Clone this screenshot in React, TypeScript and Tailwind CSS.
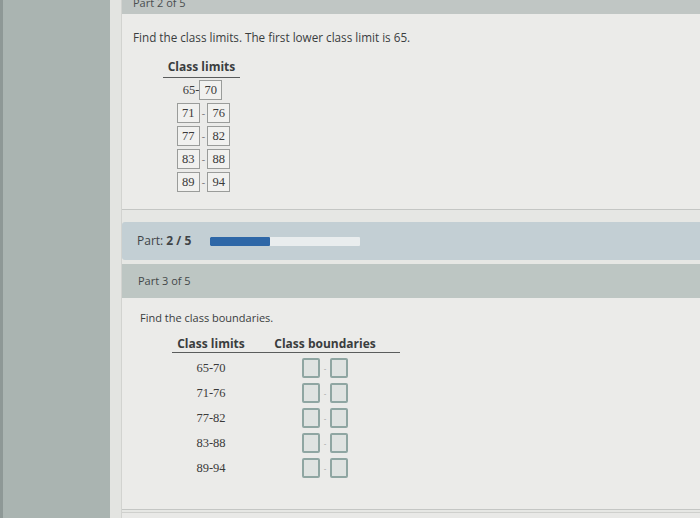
import React from 'react';

const limits = [
  ['71', '76'],
  ['77', '82'],
  ['83', '88'],
  ['89', '94'],
];

const classes = ['65-70', '71-76', '77-82', '83-88', '89-94'];

function NumBox({ value }: { value: string }) {
  return (
    <div className="w-[23px] h-[20px] flex items-center justify-center border border-[#9a9c9a] bg-[#f1f1ef] text-[12.5px] text-[#3a3a3a] [font-family:'Liberation_Serif',serif]">
      {value}
    </div>
  );
}

function EmptyBox() {
  return <div className="w-[18px] h-[20px] rounded-[2px] border-2 border-[#8fa6a2] bg-[#dfe3e1]" />;
}

export default function App() {
  return (
    <div className="w-[700px] h-[518px] flex overflow-hidden bg-[#e6e7e4] [font-family:'Open_Sans',Lato,sans-serif] text-[#3a3d3e]">
      <div className="w-[110px] shrink-0 bg-[#aab4b1] border-l-[3px] border-[#8e9896]" />
      <div className="w-[12px] shrink-0 bg-[#e3e4e1] border-r border-[#d2d3d0]" />
      <div className="flex-1 flex flex-col">
        <div className="h-[14px] bg-[#c0c6c4] overflow-hidden pl-[11px]">
          <div className="text-[11px] leading-[11px] -mt-[3px] text-[#4a4e50]">Part 2 of 5</div>
        </div>

        <div className="h-[196px] bg-[#ebebe9] border-b border-[#c4c6c4] pl-[11px] pt-[15px]">
          <p className="text-[11.7px] leading-[16px]">Find the class limits. The first lower class limit is 65.</p>
          <div className="ml-[30px] mt-[14px] w-[77px] flex flex-col items-center">
            <div className="w-full text-center font-bold text-[12px] leading-[16px] pb-[2px] border-b border-[#5a5c5c]">Class limits</div>
            <div className="flex flex-col gap-[3px] mt-[2px] w-full items-center">
              <div className="flex items-center h-[20px] pl-[2px]">
                <span className="text-[12.5px] text-[#3a3a3a] [font-family:'Liberation_Serif',serif]">65-</span>
                <NumBox value="70" />
              </div>
              {limits.map(([a, b]) => (
                <div key={a} className="flex items-center gap-[2px] pl-[4px]">
                  <NumBox value={a} />
                  <span className="text-[10px] text-[#777] [font-family:'Liberation_Serif',serif]">-</span>
                  <NumBox value={b} />
                </div>
              ))}
            </div>
          </div>
        </div>

        <div className="h-[12px]" />

        <div className="h-[38px] bg-[#c3cfd4] rounded-l-[3px] flex items-center pl-[15px]">
          <span className="w-[73px] text-[12px] text-[#3f4447]">
            Part: <span className="font-bold">2 / 5</span>
          </span>
          <div className="w-[150px] h-[9px] bg-[#e9edee] rounded-[1px] overflow-hidden">
            <div className="h-full bg-[#2e67a7] rounded-[1px]" style={{ width: '40%' }} />
          </div>
        </div>

        <div className="h-[4px]" />

        <div className="h-[34px] bg-[#bdc6c3] flex items-center pl-[16px]">
          <span className="text-[11px] text-[#434849]">Part 3 of 5</span>
        </div>

        <div className="h-[212px] bg-[#ebebe9] border-b border-[#c4c6c4] pl-[18px] pt-[12px]">
          <p className="text-[11px] leading-[16px]">Find the class boundaries.</p>
          <div className="ml-[32px] mt-[10px] w-[228px]">
            <div className="flex border-b border-[#5a5c5c]">
              <div className="w-[78px] text-center font-bold text-[12px] leading-[16px]">Class limits</div>
              <div className="w-[150px] text-center font-bold text-[12px] leading-[16px]">Class boundaries</div>
            </div>
            <div className="flex flex-col gap-[5px] mt-[5px]">
              {classes.map((c) => (
                <div key={c} className="flex items-center h-[20px]">
                  <div className="w-[78px] text-center text-[12.5px] text-[#3a3a3a] [font-family:'Liberation_Serif',serif]">{c}</div>
                  <div className="w-[150px] flex items-center justify-center gap-[4px]">
                    <EmptyBox />
                    <span className="text-[8px] text-[#999]">-</span>
                    <EmptyBox />
                  </div>
                </div>
              ))}
            </div>
          </div>
        </div>
        <div className="h-[2px]" />
        <div className="flex-1 border-t border-[#cfd0cd] bg-[#e9e9e7]" />
      </div>
    </div>
  );
}
